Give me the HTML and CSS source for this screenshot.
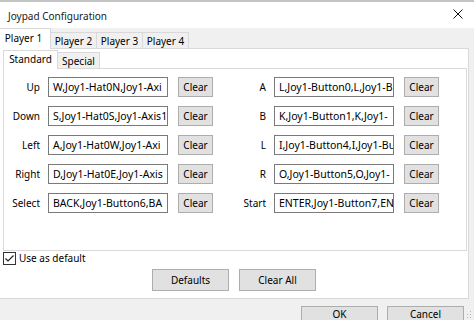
FILE: index.html
```html
<!DOCTYPE html>
<html lang="en">
<head>
    <meta charset="UTF-8">
    <title>Joypad Configuration</title>
    <link rel="stylesheet" href="styles.css">
</head>
<body>

<div class="dialog">
    <!-- Barra de titulo -->
    <div class="titlebar">
        <span class="title">Joypad Configuration</span>
        <svg class="close" width="10" height="10" viewBox="0 0 10 10">
            <path d="M0.5 0.5 L9.5 9.5 M9.5 0.5 L0.5 9.5" stroke="#111" stroke-width="1" fill="none"/>
        </svg>
    </div>

    <div class="tabs">
        <div class="tab active">Player 1</div>
        <div class="tab">Player 2</div>
        <div class="tab">Player 3</div>
        <div class="tab">Player 4</div>
    </div>

    <div class="page">
        <div class="subtabs">
            <div class="subtab active">Standard</div>
            <div class="subtab">Special</div>
        </div>

        <div class="panel">
            <div class="bindings">
                <div class="binding"><span class="key">Up</span><div class="bind">W,Joy1-Hat0N,Joy1-Axi</div><button class="clear">Clear</button></div>
                <div class="binding"><span class="key">A</span><div class="bind">L,Joy1-Button0,L,Joy1-B</div><button class="clear">Clear</button></div>
                <div class="binding"><span class="key">Down</span><div class="bind">S,Joy1-Hat0S,Joy1-Axis1</div><button class="clear">Clear</button></div>
                <div class="binding"><span class="key">B</span><div class="bind">K,Joy1-Button1,K,Joy1-</div><button class="clear">Clear</button></div>
                <div class="binding"><span class="key">Left</span><div class="bind">A,Joy1-Hat0W,Joy1-Axi</div><button class="clear">Clear</button></div>
                <div class="binding"><span class="key">L</span><div class="bind">I,Joy1-Button4,I,Joy1-Bu</div><button class="clear">Clear</button></div>
                <div class="binding"><span class="key">Right</span><div class="bind">D,Joy1-Hat0E,Joy1-Axis</div><button class="clear">Clear</button></div>
                <div class="binding"><span class="key">R</span><div class="bind">O,Joy1-Button5,O,Joy1-</div><button class="clear">Clear</button></div>
                <div class="binding"><span class="key">Select</span><div class="bind">BACK,Joy1-Button6,BA</div><button class="clear">Clear</button></div>
                <div class="binding"><span class="key">Start</span><div class="bind">ENTER,Joy1-Button7,EN</div><button class="clear">Clear</button></div>
            </div>
        </div>

        <div class="check">
            <svg class="box" width="13" height="13" viewBox="0 0 13 13">
                <rect x="0.5" y="0.5" width="12" height="12" fill="#fff" stroke="#333"/>
                <path d="M2.5 6.5 L5 9 L10.5 3.5" stroke="#222" stroke-width="1.2" fill="none"/>
            </svg>
            <span>Use as default</span>
        </div>

        <div class="actions">
            <button class="btn">Defaults</button>
            <button class="btn">Clear All</button>
        </div>
    </div>

    <div class="footer">
        <button class="btn">OK</button>
        <button class="btn">Cancel</button>
        <svg class="grip" width="6" height="8" viewBox="0 0 6 8">
            <rect x="4" y="0" width="1" height="1" fill="#b5b5b5"/>
            <rect x="4" y="3" width="1" height="1" fill="#b5b5b5"/>
            <rect x="1" y="3" width="1" height="1" fill="#b5b5b5"/>
            <rect x="4" y="6" width="1" height="1" fill="#b5b5b5"/>
            <rect x="1" y="6" width="1" height="1" fill="#b5b5b5"/>
        </svg>
    </div>
</div>

</body>
</html>
```

FILE: styles.css
```css
body {
    margin: 0;
    font-family: "Noto Sans", "Open Sans", sans-serif;
    font-size: 10px;
    color: #000;
    background-color: #f0f0f0;
    width: 474px;
    height: 320px;
    overflow: hidden;
}
.dialog {
    width: 474px;
    height: 320px;
    overflow: hidden;
}
.titlebar {
    height: 26px;
    border-top: 2px solid #c4c4c4;
    background-color: #fff;
    display: flex;
    align-items: center;
    justify-content: space-between;
    padding: 0 11px 0 8px;
}
.title {
    font-size: 10px;
    color: #1a1a1a;
    margin-top: 1px;
}
.close {
    margin-top: -2px;
}
.tabs {
    height: 20px;
    display: flex;
    align-items: flex-end;
}
.tab {
    box-sizing: border-box;
    height: 16px;
    width: 47px;
    border: 1px solid #d9d9d9;
    border-bottom: none;
    margin-left: -1px;
    background-color: #f0f0f0;
    display: flex;
    align-items: center;
    justify-content: center;
    line-height: 1;
}
.tab.active {
    position: relative;
    height: 21px;
    width: 51px;
    margin-left: 0;
    margin-bottom: -1px;
    background-color: #fff;
    border-left: none;
    padding-bottom: 2px;
    padding-right: 3px;
}
.page {
    width: 469px;
    box-sizing: border-box;
    background-color: #fff;
    border: 1px solid #d9d9d9;
    border-left: none;
    padding: 0 0 7px 3px;
}
.subtabs {
    height: 19px;
    display: flex;
    align-items: flex-end;
}
.subtab {
    box-sizing: border-box;
    height: 16px;
    width: 43px;
    border: 1px solid #d9d9d9;
    border-bottom: none;
    margin-left: -1px;
    background-color: #f0f0f0;
    display: flex;
    align-items: center;
    justify-content: center;
    line-height: 1;
}
.subtab.active {
    position: relative;
    height: 19px;
    width: 55px;
    margin-left: 0;
    margin-bottom: -1px;
    background-color: #fff;
    padding-bottom: 3px;
}
.panel {
    box-sizing: border-box;
    width: 464px;
    height: 183px;
    border: 1px solid #d9d9d9;
    padding-top: 8px;
}
.bindings {
    display: grid;
    grid-template-columns: 218px auto;
    row-gap: 9px;
}
.binding {
    display: flex;
    align-items: center;
    height: 20px;
}
.key {
    width: 36px;
    margin-right: 8px;
    text-align: right;
}
.binding:nth-child(even) .key {
    width: 44px;
}
.bind {
    box-sizing: border-box;
    width: 120px;
    height: 20px;
    border: 1px solid #7a7a7a;
    padding: 0 0 0 4px;
    font-size: 10.5px;
    white-space: nowrap;
    overflow: hidden;
    line-height: 18px;
}
.clear {
    box-sizing: border-box;
    width: 35px;
    height: 20px;
    margin-left: 10px;
    padding: 0;
    font-family: inherit;
    font-size: 10px;
    color: #000;
    background-color: #e1e1e1;
    border: 1px solid #adadad;
}
.check {
    height: 14px;
    display: flex;
    align-items: center;
    gap: 3px;
}
.actions {
    display: flex;
    justify-content: center;
    gap: 10px;
    margin-top: 4px;
    margin-left: -3px;
}
.btn {
    box-sizing: border-box;
    width: 77px;
    height: 22px;
    padding: 0;
    font-family: inherit;
    font-size: 10px;
    color: #000;
    background-color: #e1e1e1;
    border: 1px solid #adadad;
}
.footer {
    position: relative;
    display: flex;
    justify-content: flex-end;
    gap: 9px;
    padding: 7px 10px 0 0;
}
/* el borde inferior queda fuera de la ventana */
.footer .btn {
    height: 14px;
    border-bottom: none;
    line-height: 12px;
    padding-top: 1px;
}
.grip {
    position: absolute;
    right: 2px;
    top: 12px;
}
```
